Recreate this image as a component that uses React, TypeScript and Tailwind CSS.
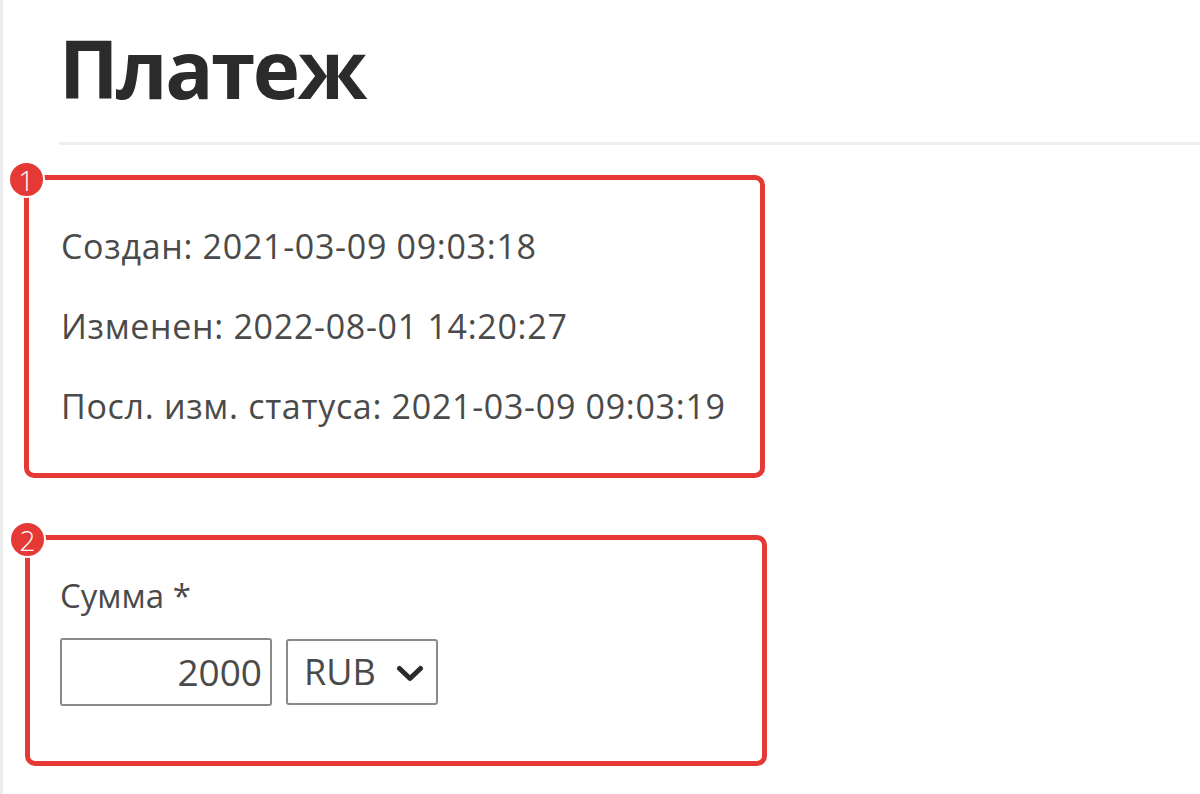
function Badge({ n }: { n: number }) {
  return (
    <div className="absolute -left-[21px] -top-[19px] w-[37px] h-[37px] rounded-full bg-[#e53935] border-[2px] border-white flex items-center justify-center text-white text-[28px] leading-none font-light">
      {n}
    </div>
  );
}

export default function App() {
  return (
    <div
      className="w-[1200px] h-[794px] bg-white border-l-[3px] border-[#ececec] overflow-hidden"
      style={{ fontFamily: '"Open Sans", "Noto Sans", sans-serif' }}
    >
      <div className="pl-[56px] pt-[22px]">
        <h1 className="text-[80px] leading-[92px] font-bold text-[#2b2b2b] tracking-[-2.5px]">Платеж</h1>
        <div className="mt-[28px] h-[3px] bg-[#eeeeee]" />
      </div>

      {/* Dates */}
      <div className="relative ml-[21px] mt-[30px] w-[741px] h-[303px] border-[5px] border-[#e53935] rounded-[10px] pl-[32px] pt-[26px] text-[#4a4a4a] text-[34px] leading-[80px] tracking-[0.7px]">
        <Badge n={1} />
        <div>Создан: 2021-03-09 09:03:18</div>
        <div>Изменен: 2022-08-01 14:20:27</div>
        <div>Посл. изм. статуса: 2021-03-09 09:03:19</div>
      </div>

      {/* Amount */}
      <div className="relative ml-[22px] mt-[57px] w-[742px] h-[231px] border-[5px] border-[#e53935] rounded-[10px] pl-[30px] pt-[36px] text-[#4a4a4a]">
        <Badge n={2} />
        <div className="text-[33px] leading-[40px]">Сумма *</div>
        <div className="flex gap-[14px] mt-[22px] items-center">
          <div className="w-[212px] h-[68px] border-[2px] border-[#8a8a8a] rounded-[3px] flex items-center justify-end pr-[8px] text-[37px]">
            2000
          </div>
          <div className="w-[152px] h-[66px] border-[2px] border-[#8a8a8a] rounded-[3px] flex items-center justify-between pl-[16px] pr-[12px] text-[36px]">
            <span>RUB</span>
            <svg width="28" height="18" viewBox="0 0 28 18" fill="none" className="mt-[4px]">
              <path d="M3.5 3.5 L14 13.5 L24.5 3.5" stroke="#2b2b2b" strokeWidth="5" strokeLinecap="round" strokeLinejoin="round" />
            </svg>
          </div>
        </div>
      </div>
    </div>
  );
}
